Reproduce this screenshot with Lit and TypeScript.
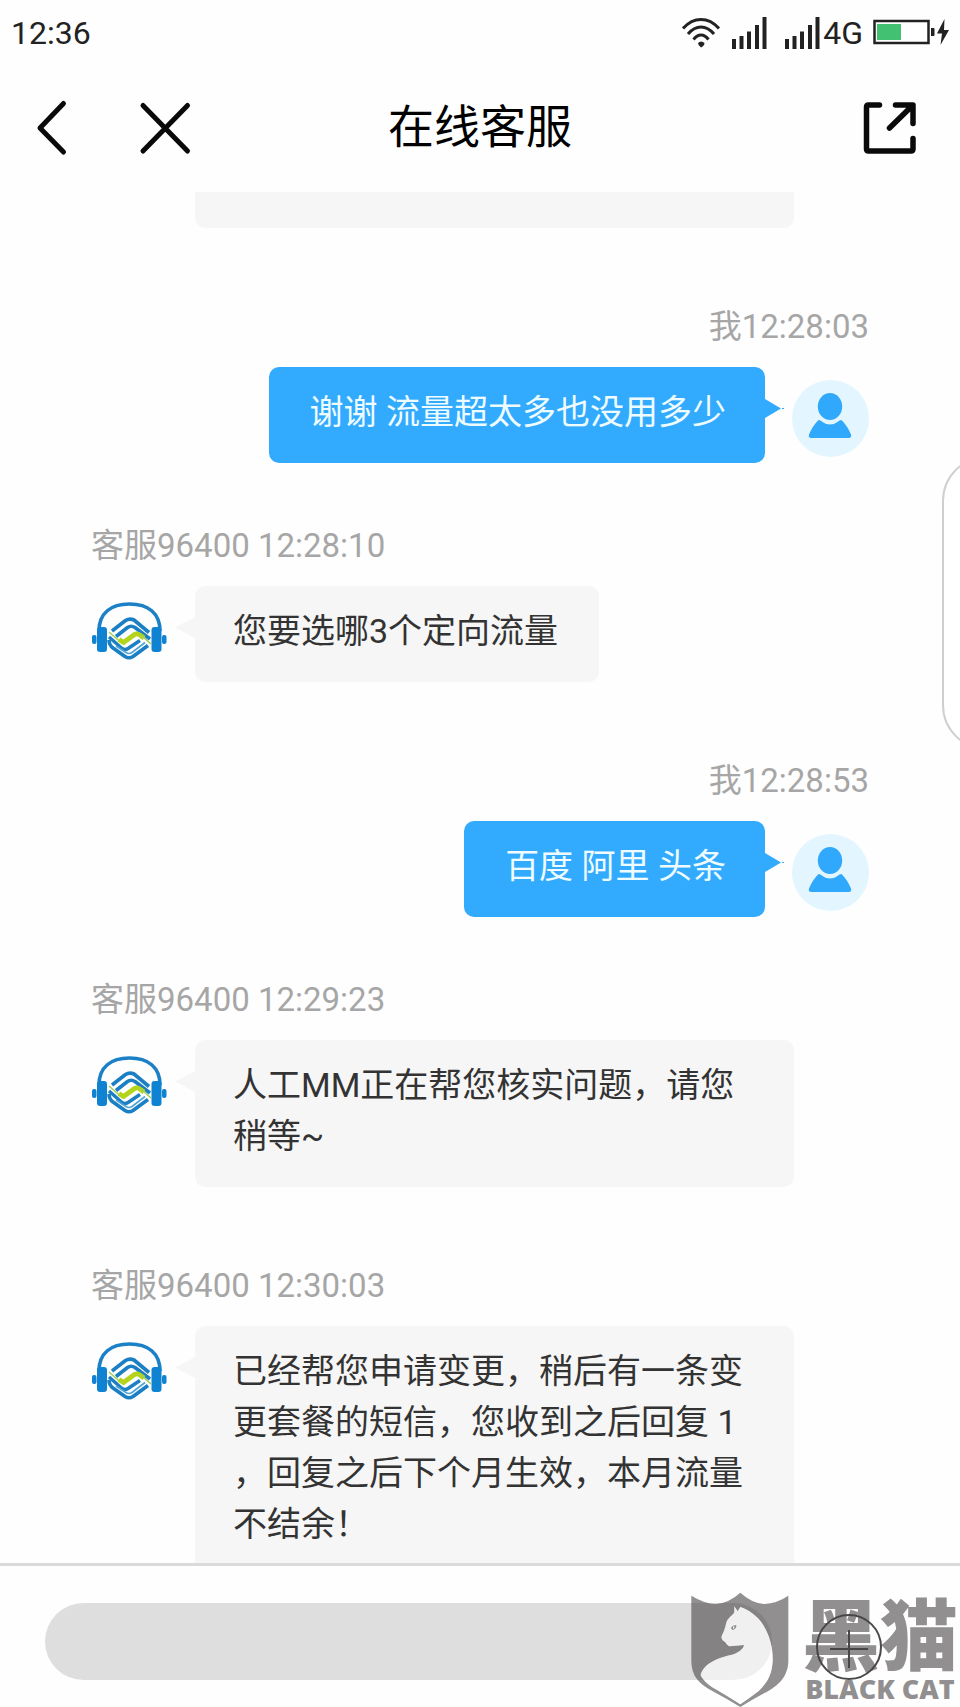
import { LitElement, html, css, svg } from "lit";
import { customElement, property } from "lit/decorators.js";
import { classMap } from "lit/directives/class-map.js";

interface Message {
  from: "agent" | "me";
  label: string;
  text: string;
}

const MESSAGES: Message[] = [
  { from: "me", label: "我12:28:03", text: "谢谢 流量超太多也没用多少" },
  { from: "agent", label: "客服96400 12:28:10", text: "您要选哪3个定向流量" },
  { from: "me", label: "我12:28:53", text: "百度 阿里 头条" },
  { from: "agent", label: "客服96400 12:29:23", text: "人工MM正在帮您核实问题，请您稍等~" },
  {
    from: "agent",
    label: "客服96400 12:30:03",
    text: "已经帮您申请变更，稍后有一条变更套餐的短信，您收到之后回复 1，回复之后下个月生效，本月流量不结余！",
  },
];

@customElement("status-bar")
export class StatusBar extends LitElement {
  static styles = css`
    :host {
      display: flex;
      align-items: center;
      justify-content: space-between;
      height: 64px;
      padding: 2px 10px 0 11px;
      box-sizing: border-box;
      font-size: 32px;
      line-height: 40px;
      color: #222;
    }
    .icons {
      display: flex;
      align-items: center;
    }
    svg {
      display: block;
    }
    .signal {
      margin-left: 12px;
    }
    .second {
      margin-left: 18px;
    }
    .network {
      margin-left: 3px;
    }
    .battery {
      margin-left: 10px;
    }
  `;

  private bars() {
    return svg`
      <rect x="0" y="22" width="4" height="10"></rect>
      <rect x="7.5" y="19" width="4" height="13"></rect>
      <rect x="15" y="14.500" width="4" height="17.500"></rect>
      <rect x="23" y="8" width="4" height="24"></rect>
      <rect x="30.500" y="0" width="4" height="32"></rect>`;
  }

  render() {
    return html`
      <span>12:36</span>
      <div class="icons">
        <svg width="38" height="32" viewBox="0 0 38 32" aria-label="Wi-Fi">
          <g fill="none" stroke="#222" stroke-width="3">
            <path d="M1 11.500Q9 2.500 19 2.500T37 11.500"></path>
            <path d="M6 17Q12 10 19 10T32 17"></path>
            <path d="M11.500 22.500Q15 18 19 18T26.500 22.500"></path>
          </g>
          <path d="M16 26Q19 23 22.500 26Q22.500 28.500 19 30.500Q16 28.500 16 26Z" fill="#222"></path>
        </svg>
        <svg class="signal" width="35" height="32" viewBox="0 0 35 32" fill="#222">${this.bars()}</svg>
        <svg class="signal second" width="35" height="32" viewBox="0 0 35 32" fill="#222">${this.bars()}</svg>
        <span class="network">4G</span>
        <svg class="battery" width="77" height="28" viewBox="0 0 77 28">
          <rect x="1.500" y="2" width="54" height="22" fill="#fff" stroke="#222" stroke-width="2.500"></rect>
          <rect x="4" y="5" width="24" height="16" fill="#43c173"></rect>
          <path d="M58 9h2.500q1 0 1 1v6q0 1-1 1H58z" fill="#222"></path>
          <path d="M71.500 0L64 14.500h5L67.500 26L76 11h-5z" fill="#222"></path>
        </svg>
      </div>
    `;
  }
}

@customElement("nav-header")
export class NavHeader extends LitElement {
  static styles = css`
    :host {
      display: grid;
      grid-template-columns: 1fr auto 1fr;
      align-items: center;
      height: 128px;
      padding: 0 34px;
      box-sizing: border-box;
    }
    .left {
      display: flex;
      gap: 68px;
    }
    button {
      display: block;
      padding: 0;
      border: 0;
      background: none;
    }
    .share {
      justify-self: end;
      padding-right: 6px;
    }
    svg {
      display: block;
      fill: none;
      stroke: #0a0a0a;
      stroke-linecap: round;
      stroke-linejoin: round;
    }
    h1 {
      margin: 0 0 2px;
      font-size: 46px;
      font-weight: 400;
      line-height: 64px;
      color: #000;
    }
  `;

  render() {
    return html`
      <div class="left">
        <button aria-label="返回">
          <svg width="36" height="60" viewBox="0 0 36 60" stroke-width="5">
            <path d="M29.500 5.500L6 30L29.500 54"></path>
          </svg>
        </button>
        <button aria-label="关闭">
          <svg width="56" height="60" viewBox="0 0 56 60" stroke-width="5">
            <path d="M5 7.500L49.500 53M49.500 7.500L5 53"></path>
          </svg>
        </button>
      </div>
      <h1>在线客服</h1>
      <button class="share" aria-label="分享">
        <svg width="60" height="60" viewBox="0 0 60 60" stroke-width="5.500">
          <path d="M19.500 7H8.500Q6.500 7 6.500 9V51Q6.500 53 8.500 53H51Q53 53 53 51V40.500"></path>
          <path d="M35.500 7H53V25.500M52 8L29.500 30"></path>
        </svg>
      </button>
    `;
  }
}

@customElement("chat-message")
export class ChatMessage extends LitElement {
  @property({ attribute: false }) message!: Message;

  static styles = css`
    :host {
      display: block;
      flex: none;
    }
    .message {
      display: flex;
      flex-direction: column;
      gap: 20px;
      padding: 0 91px;
      margin-bottom: 78px;
    }
    .mine {
      margin-bottom: 62px;
    }
    .label {
      font-size: 33px;
      line-height: 41px;
      color: #a6a6a6;
    }
    .mine .label {
      text-align: right;
    }
    .row {
      display: flex;
      align-items: flex-start;
      gap: 27px;
    }
    .mine .row {
      flex-direction: row-reverse;
    }
    .avatar {
      display: block;
      flex: none;
      margin-top: 13px;
    }
    .bubble {
      position: relative;
      margin: 0 75px 0 0;
      padding: 20px 41px 25px 38px;
      border-radius: 10px;
      background: #f6f6f6;
      color: #333;
      font-size: 34px;
      line-height: 51px;
      line-break: anywhere;
    }
    .mine .bubble {
      margin: 0;
      padding: 20px 39px 25px 41px;
      background: #32abff;
      color: #effcff;
    }
    .tail {
      position: absolute;
      top: 30px;
      right: 100%;
    }
    .mine .tail {
      right: auto;
      left: 100%;
    }
  `;

  private agentAvatar() {
    return html`
      <svg class="avatar" width="77" height="77" viewBox="0 0 77 77" aria-hidden="true">
        <path d="M8 32C8 14 20 5 38.500 5S69 14 69 32" fill="none" stroke="#1b80c6" stroke-width="3.600"></path>
        <g fill="#0f82d2">
          <rect x="6" y="28" width="10" height="25" rx="3"></rect>
          <rect x="60.500" y="28" width="10" height="25" rx="3"></rect>
          <rect x="1" y="36" width="4.500" height="9" rx="2"></rect>
          <rect x="71" y="36" width="4.500" height="9" rx="2"></rect>
        </g>
        <g fill="none" stroke-linejoin="round">
          <path d="M21 32L34.500 21.500Q38.500 19 43 21L58 33.500" stroke="#1b7fc4" stroke-width="3.600"></path>
          <path d="M25 37.500L36.500 28.500Q40 26 44 28.500L59 40" stroke="#1b7fc4" stroke-width="3.600"></path>
          <path d="M18 33L30 43.500" stroke="#9ed05a" stroke-width="1.600"></path>
          <path d="M28 40.500L32.500 43.500L43.500 35.500Q46.500 34 49.500 36.500L53 39" stroke="#b4d41c" stroke-width="4.800"></path>
          <path d="M50 36L60 45" stroke="#9ed05a" stroke-width="1.600"></path>
          <path d="M18 38L31 49.500Q34 51.500 37 49.500L49 41.500" stroke="#1b7fc4" stroke-width="3.400"></path>
          <path d="M54 43.500L41 53.500Q38 55.500 35 53.500L25 47" stroke="#4fa5d8" stroke-width="1.600"></path>
          <path d="M18 41Q18 46 22 49L34 57.500Q38 60 42 57.500L57 46.500" stroke="#1b7fc4" stroke-width="3.600"></path>
        </g>
      </svg>
    `;
  }

  private userAvatar() {
    return html`
      <svg class="avatar" width="77" height="77" viewBox="0 0 77 77" aria-hidden="true">
        <circle cx="38.500" cy="38.500" r="38.500" fill="#e3f6ff"></circle>
        <ellipse cx="38" cy="26.500" rx="12.200" ry="13.500" fill="#30a8fb"></ellipse>
        <path
          d="M26.500 40Q28.500 40 30.500 42Q34 44.500 38 44.500T45.500 42Q47.500 40 49.500 40Q55.500 46 59 54.500Q60 58 56.500 58H19.500Q16 58 17 54.500Q20.500 46 26.500 40Z"
          fill="#30a8fb"
        ></path>
      </svg>
    `;
  }

  render() {
    const mine = this.message.from === "me";
    return html`
      <article class=${classMap({ message: true, mine })}>
        <div class="label">${this.message.label}</div>
        <div class="row">
          ${mine ? this.userAvatar() : this.agentAvatar()}
          <div class="bubble">
            ${this.message.text}
            ${mine
              ? html`<svg class="tail" width="20" height="22" viewBox="0 0 20 22" fill="#32abff">
                  <path d="M0 2L16 11.500L0 21Z"></path>
                  <rect x="17" y="11" width="2" height="1"></rect>
                </svg>`
              : html`<svg class="tail" width="20" height="22" viewBox="0 0 20 22" fill="#f6f6f6">
                  <path d="M20 1L0 11.500L20 22Z"></path>
                </svg>`}
          </div>
        </div>
      </article>
    `;
  }
}

@customElement("black-cat-mark")
export class BlackCatMark extends LitElement {
  static styles = css`
    :host {
      display: flex;
      align-items: flex-end;
      gap: 13px;
      color: rgba(72, 68, 70, 0.6);
    }
    svg {
      display: block;
    }
    .words {
      display: flex;
      flex-direction: column;
      align-items: center;
      white-space: nowrap;
    }
    .name {
      font-family: "Noto Sans CJK SC", sans-serif;
      font-size: 78px;
      font-weight: 900;
      line-height: 78px;
    }
    .latin {
      font-family: "Open Sans", sans-serif;
      font-size: 27px;
      font-weight: 800;
      line-height: 37px;
    }
  `;

  render() {
    const cat =
      "M222 137L232 152L240 139C262 146 292 165 310 195C330 228 338 265 337 300C335 345 318 368 296 390Q270 410 240 431Q200 405 165 385C140 372 122 350 121 343C130 305 180 290 215 282C240 275 250 262 251 253L208 257C198 252 197 245 193 243C184 238 182 230 185 224C195 205 196 190 200 180C208 168 220 162 222 155Z";
    const shield =
      "M93 105Q135 130 165 130Q205 128 240 96Q275 128 312 130Q350 128 384 105V300C384 350 350 376 320 393Q280 414 240 439Q200 414 160 393C115 370 93 345 93 300Z";
    return html`
      <svg width="98" height="115" viewBox="92 94 294 345" aria-hidden="true">
        <path d="${shield}${cat}" fill="currentColor" fill-rule="evenodd"></path>
        <path d=${cat} fill="#fff" fill-opacity="0.55"></path>
        <path d="M212 203Q215 193 228 194Q228 205 217 208Z" fill="currentColor"></path>
        <path d="M220 195Q225 200 220 206Q216 200 220 195Z" fill="#fff"></path>
      </svg>
      <div class="words">
        <span class="name">黑猫</span>
        <span class="latin">BLACK CAT</span>
      </div>
    `;
  }
}

@customElement("app-root")
export class AppRoot extends LitElement {
  static styles = css`
    :host {
      position: relative;
      display: flex;
      flex-direction: column;
      height: 100vh;
      overflow: hidden;
      background: #fefefe;
      font-family: Roboto, "Noto Sans CJK SC", sans-serif;
    }
    status-bar,
    nav-header {
      flex: none;
    }
    .chat {
      display: flex;
      flex: 1;
      flex-direction: column;
      min-height: 0;
      overflow: hidden;
    }
    .earlier {
      flex: none;
      height: 36px;
      margin: 0 166px 78px 195px;
      border-radius: 0 0 10px 10px;
      background: #f6f6f6;
    }
    .composer {
      display: flex;
      flex: none;
      align-items: flex-end;
      gap: 44px;
      padding: 37px 78px 27px 45px;
      border-top: 3px solid #dadada;
      background: #fefefe;
    }
    .field {
      flex: 1;
      min-width: 0;
      height: 77px;
      padding: 0 36px;
      box-sizing: border-box;
      border: 0;
      border-radius: 39px;
      outline: 0;
      background: #dedede;
      font: inherit;
      font-size: 34px;
    }
    .more {
      flex: none;
      padding: 0;
      border: 0;
      background: none;
    }
    .more svg {
      display: block;
    }
    .drawer {
      position: absolute;
      top: 456px;
      right: -72px;
      width: 90px;
      height: 294px;
      padding: 0;
      box-sizing: border-box;
      border: 2px solid #cfcfcf;
      border-radius: 45px;
      background: #fff;
    }
    .mark {
      position: absolute;
      right: 2px;
      bottom: 0;
      pointer-events: none;
    }
  `;

  render() {
    return html`
      <status-bar></status-bar>
      <nav-header></nav-header>
      <main class="chat">
        <div class="earlier"></div>
        ${MESSAGES.map((m) => html`<chat-message .message=${m}></chat-message>`)}
      </main>
      <footer class="composer">
        <input class="field" type="text" aria-label="输入消息" />
        <button class="more" aria-label="更多">
          <svg width="66" height="66" viewBox="0 0 66 66" fill="none" stroke="#4a4a4a" stroke-width="2">
            <circle cx="33" cy="33" r="32"></circle>
            <path d="M14 35H52M33 16V54"></path>
          </svg>
        </button>
      </footer>
      <button class="drawer" aria-label="展开侧栏"></button>
      <black-cat-mark class="mark"></black-cat-mark>
    `;
  }
}
